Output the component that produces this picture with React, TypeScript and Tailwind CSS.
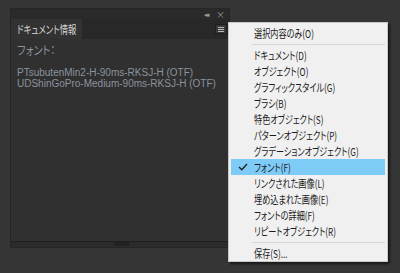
const jp = {
  fontFamily: '"Noto Sans CJK JP", "Noto Sans", sans-serif',
  fontFeatureSettings: '"palt"',
};

const items: { label: string; sep?: boolean; checked?: boolean }[] = [
  { label: "選択内容のみ(O)" },
  { label: "", sep: true },
  { label: "ドキュメント(D)" },
  { label: "オブジェクト(O)" },
  { label: "グラフィックスタイル(G)" },
  { label: "ブラシ(B)" },
  { label: "特色オブジェクト(S)" },
  { label: "パターンオブジェクト(P)" },
  { label: "グラデーションオブジェクト(G)" },
  { label: "フォント(F)", checked: true },
  { label: "リンクされた画像(L)" },
  { label: "埋め込まれた画像(E)" },
  { label: "フォントの詳細(F)" },
  { label: "リピートオブジェクト(R)" },
  { label: "", sep: true },
  { label: "保存(S)..." },
];

export default function App() {
  return (
    <div className="relative w-[400px] h-[273px] bg-[#353535] pl-[10px] pt-[8px] overflow-hidden" style={jp}>
      {/* Panel */}
      <div className="w-[220px] h-[240px] flex flex-col border border-[#262626] bg-[#303030]">
        <div className="h-[10px] bg-[#2a2a2a] flex items-center justify-end gap-[8px] pr-[4px] text-[#9a9a9a]">
          <span className="text-[7px] leading-none tracking-[-2px]">◂◂</span>
          <span className="text-[9px] leading-none">×</span>
        </div>
        <div className="h-[20px] bg-[#282828] flex items-stretch">
          <div className="w-[71px] bg-[#323232] flex items-center pl-[6px] text-[11px] whitespace-nowrap text-[#d6d6d6] leading-none">
            <span className="inline-block origin-left scale-x-[0.76]">ドキュメント情報</span>
          </div>
          <div className="flex-1 flex items-center justify-end pr-[2px]">
            <div className="w-[12px] h-[10px] border border-[#1e1e1e] bg-[#3a3a3a] flex flex-col justify-center gap-[1px] px-[2px]">
              <div className="h-px bg-[#bbbbbb]" />
              <div className="h-px bg-[#bbbbbb]" />
              <div className="h-px bg-[#bbbbbb]" />
            </div>
          </div>
        </div>
        <div className="flex-1 pl-[6px] pt-[5px] text-[12px] leading-[12px] text-[#8b939d] whitespace-nowrap">
          <div>
            <span className="inline-block origin-left scale-x-[0.85]">フォント：</span>
          </div>
          <div className="mt-[11px] text-[10px] leading-[11px]" style={{ fontFamily: '"Liberation Sans", Arial, sans-serif' }}>
            PTsubutenMin2-H-90ms-RKSJ-H (OTF)
          </div>
          <div className="text-[10px] leading-[11px]" style={{ fontFamily: '"Liberation Sans", Arial, sans-serif' }}>
            UDShinGoPro-Medium-90ms-RKSJ-H (OTF)
          </div>
        </div>
        <div className="h-[6px] border-t border-[#1f1f1f] bg-[#2b2b2b] flex">
          <div className="ml-[103px] w-[15px] h-[4px] bg-[#222222]" />
        </div>
      </div>

      {/* Menu */}
      <div className="absolute left-[228px] top-[22px] w-[160px] h-[240px] bg-[#f0f0f0] border border-[#c8c8c8] shadow-[2px_2px_2px_rgba(0,0,0,0.55)] pt-[2px] px-[2px] overflow-hidden">
        {items.map((it, i) =>
          it.sep ? (
            <div key={i} className="h-[6px] flex items-center pl-[21px]">
              <div className="h-px w-full bg-[#d7d7d7]" />
            </div>
          ) : (
            <div
              key={i}
              className={`h-[16px] flex items-center text-[11px] whitespace-nowrap leading-none text-[#1a1a1a] ${it.checked ? "bg-[#7ecbf8]" : ""}`}
            >
              <span className="w-[23px] shrink-0 flex justify-center pl-[1px]">
                {it.checked && (
                  <svg width="10" height="8" viewBox="0 0 10 8">
                    <path d="M1 4 L3.8 6.8 L9 1" fill="none" stroke="#1a1a1a" strokeWidth="1.3" />
                  </svg>
                )}
              </span>
              <span className="inline-block shrink-0 origin-left scale-x-[0.74]">{it.label}</span>
            </div>
          )
        )}
      </div>
    </div>
  );
}
